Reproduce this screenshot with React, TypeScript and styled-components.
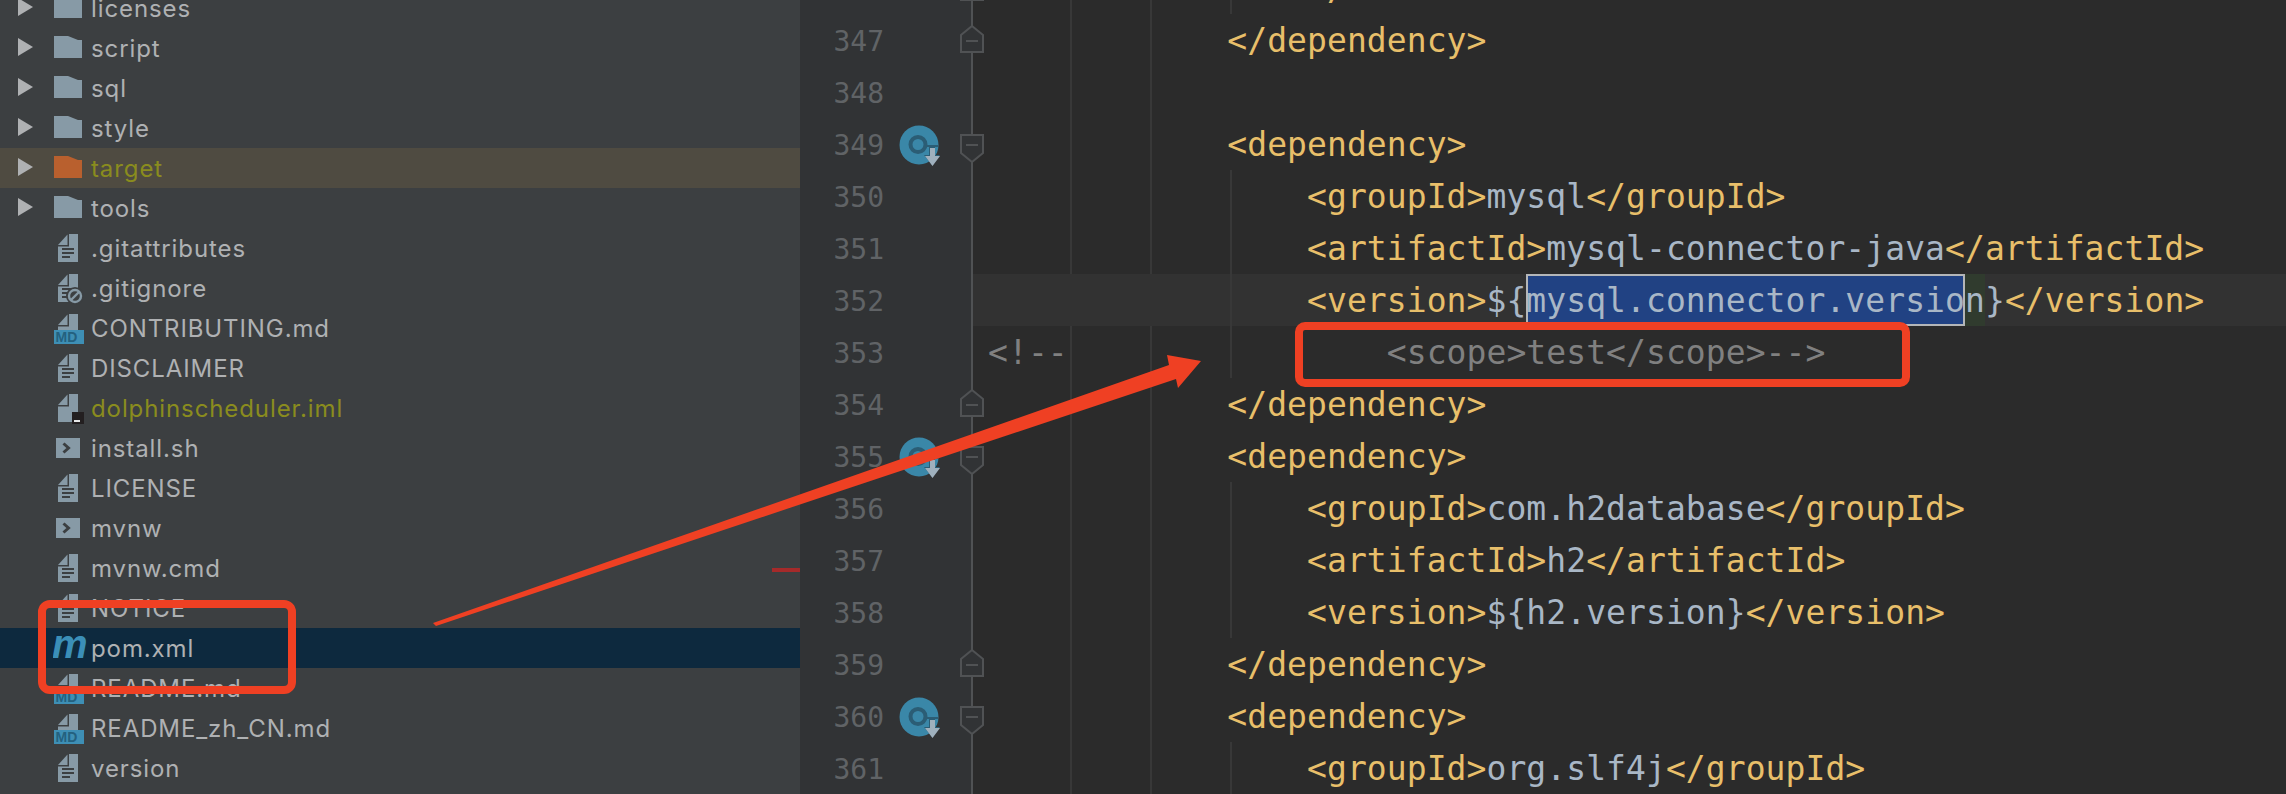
import React from 'react'

import styled, { createGlobalStyle } from 'styled-components'

const GlobalStyle = createGlobalStyle`
  html, body {
    margin: 0;
    padding: 0;
    background: #2b2b2b;
  }
`

const Root = styled.div`
  position: relative;
  display: flex;
  width: 2286px;
  height: 794px;
  overflow: hidden;
`

const Sidebar = styled.div`
  flex: 0 0 800px;
  background: #3c3f41;
`

const TreeList = styled.div`
  margin-top: -12px;
`

const TreeRow = styled.div<{ $state?: string }>`
  display: flex;
  align-items: center;
  height: 40px;
  background: ${(p) => (p.$state === 'selected' ? '#0d293e' : p.$state === 'ignored' ? '#4f4b41' : 'transparent')};
`

const Arrow = styled.span`
  display: flex;
  flex: 0 0 53px;
  padding: 0 0 2px 18px;
  box-sizing: border-box;
`

const IconSlot = styled.span`
  display: flex;
  flex: 0 0 37px;
`

const TreeLabel = styled.span<{ $ignored?: boolean }>`
  font-family: Inter, "Noto Sans", sans-serif;
  font-size: 24px;
  letter-spacing: 0.9px;
  white-space: nowrap;
  color: ${(p) => (p.$ignored ? '#8a8c1e' : '#afb1b3')};
`

const Editor = styled.div`
  flex: 1;
  display: flex;
  min-width: 0;
`

const Gutter = styled.div`
  flex: 0 0 173px;
  background: #313335;
  border-right: 2px solid #505254;
  box-sizing: border-box;
`

const CodePane = styled.div`
  flex: 1;
  min-width: 0;
  background-color: #2b2b2b;
  background-image: linear-gradient(#383838, #383838), linear-gradient(#383838, #383838);
  background-size: 2px 100%, 2px 100%;
  background-position: 97px 0, 177px 0;
  background-repeat: no-repeat;
`

const LineList = styled.div`
  margin-top: -38px;
`

const GutterRow = styled.div`
  position: relative;
  display: flex;
  align-items: center;
  height: 52px;
`

const LineNumber = styled.span`
  flex: 0 0 84px;
  padding-top: 2px;
  text-align: right;
  font-family: "DejaVu Sans Mono", monospace;
  font-size: 28px;
  color: #606366;
`

const MarkerSlot = styled.span`
  display: flex;
  margin-left: 15px;
  padding-top: 5px;
`

const Fold = styled.svg<{ $kind: string }>`
  position: absolute;
  left: 160px;
  top: ${(p) => (p.$kind === 'start' ? 16 : 11)}px;
`

const CodeRow = styled.div<{ $current?: boolean; $guide?: boolean }>`
  position: relative;
  height: 52px;
  line-height: 54px;
  padding-left: 15px;
  font-family: "DejaVu Sans Mono", monospace;
  font-size: 33px;
  letter-spacing: 0.07px;
  white-space: pre;
  background: ${(p) => (p.$current ? '#323232' : 'transparent')};
  ${(p) =>
    p.$guide &&
    `&::before {
      content: '';
      position: absolute;
      left: 257px;
      top: 0;
      bottom: 0;
      width: 2px;
      background: #383838;
    }`}
`

const Tag = styled.span`
  color: #e8bf6a;
`

const Value = styled.span`
  color: #a9b7c6;
`

const Comment = styled.span`
  color: #808080;
`

const Selection = styled.span`
  display: inline-block;
  vertical-align: top;
  height: 52px;
  background: #214283;
  box-shadow: inset 0 0 0 2px #b4b6b8;
  color: #a9b7c6;
`

const BraceMatch = styled.span`
  display: inline-block;
  vertical-align: top;
  height: 52px;
  background: #303b2e;
  color: #a9b7c6;
`

const RedFrame = styled.div<{ $left: number; $top: number; $width: number; $height: number; $radius: number }>`
  position: absolute;
  left: ${(p) => p.$left}px;
  top: ${(p) => p.$top}px;
  width: ${(p) => p.$width}px;
  height: ${(p) => p.$height}px;
  box-sizing: border-box;
  border: 8px solid #ef4023;
  border-radius: ${(p) => p.$radius}px;
`

const RedDash = styled.div`
  position: absolute;
  left: 772px;
  top: 568px;
  width: 28px;
  height: 4px;
  background: #a52a2a;
`

const ArrowOverlay = styled.svg`
  position: absolute;
  left: 0;
  top: 0;
  pointer-events: none;
`

const blue = '#879aa6'
const dark = '#3c3f41'

function Page({ short }: { short?: boolean }) {
  return (
    <>
      <polygon points="14.5,6.5 14.5,17 5,17" fill={blue} />
      <path d={short ? 'M16 6H25V22H5V18.5H16Z' : 'M16 6H25V34H5V18.5H16Z'} fill={blue} />
    </>
  )
}

function Folder({ color }: { color: string }) {
  return (
    <svg width="38" height="40">
      <path d="M1 8H15L25 12H29V30H1Z" fill={color} />
    </svg>
  )
}

function FileIcon({ kind }: { kind: string }) {
  if (kind === 'folder') return <Folder color={blue} />
  if (kind === 'target') return <Folder color="#b9602e" />
  if (kind === 'shell') {
    return (
      <svg width="38" height="40">
        <rect x="3" y="10" width="24" height="20" fill={blue} />
        <path d="M10.5 15.5L15.5 20L10.5 24.5" fill="none" stroke={dark} strokeWidth="3" />
      </svg>
    )
  }
  if (kind === 'maven') {
    return (
      <svg width="38" height="40">
        <text x="-1" y="30" fontFamily="Liberation Sans" fontWeight="700" fontStyle="italic" fontSize="40" fill="#3b8fb8">
          m
        </text>
      </svg>
    )
  }
  if (kind === 'md') {
    return (
      <svg width="38" height="40">
        <Page short />
        <rect x="1" y="22" width="30" height="14" fill="#3e8fb5" />
        <text x="2.5" y="33.5" fontFamily="Liberation Sans" fontWeight="700" fontSize="14" fill="#24617f">
          MD
        </text>
      </svg>
    )
  }
  return (
    <svg width="38" height="40">
      <Page />
      {(kind === 'text' || kind === 'ignore') && (
        <path d="M9 21H21M9 25H21M9 29H17" stroke={dark} strokeWidth="2" />
      )}
      {kind === 'ignore' && (
        <>
          <circle cx="22" cy="28" r="9" fill={dark} />
          <circle cx="22" cy="28" r="6" fill="none" stroke={blue} strokeWidth="2.4" />
          <path d="M18 32L26 24" stroke={blue} strokeWidth="2.4" />
        </>
      )}
      {kind === 'iml' && (
        <>
          <rect x="19" y="24" width="12" height="12" fill="#231f20" />
          <rect x="21" y="32" width="6" height="2" fill="#e8e8e8" />
        </>
      )}
    </svg>
  )
}

const treeItems = [
  { name: 'licenses', icon: 'folder' },
  { name: 'script', icon: 'folder' },
  { name: 'sql', icon: 'folder' },
  { name: 'style', icon: 'folder' },
  { name: 'target', icon: 'target', state: 'ignored' },
  { name: 'tools', icon: 'folder' },
  { name: '.gitattributes', icon: 'text' },
  { name: '.gitignore', icon: 'ignore' },
  { name: 'CONTRIBUTING.md', icon: 'md' },
  { name: 'DISCLAIMER', icon: 'text' },
  { name: 'dolphinscheduler.iml', icon: 'iml', state: 'olive' },
  { name: 'install.sh', icon: 'shell' },
  { name: 'LICENSE', icon: 'text' },
  { name: 'mvnw', icon: 'shell' },
  { name: 'mvnw.cmd', icon: 'text' },
  { name: 'NOTICE', icon: 'text' },
  { name: 'pom.xml', icon: 'maven', state: 'selected' },
  { name: 'README.md', icon: 'md' },
  { name: 'README_zh_CN.md', icon: 'md' },
  { name: 'version', icon: 'text' },
]

function TreeItem({ item }: { item: { name: string; icon: string; state?: string } }) {
  const isFolder = item.icon === 'folder' || item.icon === 'target'
  return (
    <TreeRow $state={item.state}>
      <Arrow>
        {isFolder && (
          <svg width="15" height="18">
            <polygon points="0,0 15,9 0,18" fill="#afb1b3" />
          </svg>
        )}
      </Arrow>
      <IconSlot>
        <FileIcon kind={item.icon} />
      </IconSlot>
      <TreeLabel $ignored={item.state === 'ignored' || item.state === 'olive'}>{item.name}</TreeLabel>
    </TreeRow>
  )
}

function MavenMark() {
  return (
    <svg width="44" height="44">
      <circle cx="20" cy="20" r="19.5" fill="#3a87a8" />
      <circle cx="19" cy="19.5" r="7.5" fill="none" stroke="#2b5d75" strokeWidth="4" />
      <path d="M25 21H39" stroke="#2b5d75" strokeWidth="2" />
      <path d="M30 22H36V30H41L33 40L25 30H30Z" fill="#2b5d75" />
      <path d="M31 23H36V31H41L33.5 41L26 31H31Z" fill="#9fb0bd" />
    </svg>
  )
}

function FoldMark({ kind }: { kind: string }) {
  const outline = kind === 'start' ? 'M1 1H23V19L12 28L1 19Z' : 'M12 1L23 10V27H1V10Z'
  const dashY = kind === 'start' ? 11 : 16
  return (
    <Fold $kind={kind} width="24" height="29">
      <path d={outline} fill="#313335" stroke="#505254" strokeWidth="2" />
      <path d={`M6 ${dashY}H18`} stroke="#505254" strokeWidth="2" />
    </Fold>
  )
}

const foldMarks: Record<number, string> = {
  346: 'end',
  347: 'end',
  349: 'start',
  354: 'end',
  355: 'start',
  359: 'end',
  360: 'start',
}

const mavenLines = [349, 355, 360]

const lineNumbers = Array.from({ length: 16 }, (_, i) => 346 + i)

const guideLines = [346, 350, 351, 352, 353, 356, 357, 358, 361]

const indent = '            '
const deeper = '                '

function tagLine(pad: string, open: string, value: string, close: string) {
  return (
    <>
      {pad}
      <Tag>{`<${open}>`}</Tag>
      <Value>{value}</Value>
      <Tag>{`</${close}>`}</Tag>
    </>
  )
}

function plainTag(text: string) {
  return (
    <>
      {indent}
      <Tag>{text}</Tag>
    </>
  )
}

const codeLines: Record<number, React.ReactNode> = {
  346: (
    <>
      {deeper}
      <Tag>{'</exclusions>'}</Tag>
    </>
  ),
  347: plainTag('</dependency>'),
  349: plainTag('<dependency>'),
  350: tagLine(deeper, 'groupId', 'mysql', 'groupId'),
  351: tagLine(deeper, 'artifactId', 'mysql-connector-java', 'artifactId'),
  352: (
    <>
      {deeper}
      <Tag>{'<version>'}</Tag>
      <Value>{'${'}</Value>
      <Selection>mysql.connector.versio</Selection>
      <BraceMatch>n</BraceMatch>
      <Value>{'}'}</Value>
      <Tag>{'</version>'}</Tag>
    </>
  ),
  353: <Comment>{'<!--                <scope>test</scope>-->'}</Comment>,
  354: plainTag('</dependency>'),
  355: plainTag('<dependency>'),
  356: tagLine(deeper, 'groupId', 'com.h2database', 'groupId'),
  357: tagLine(deeper, 'artifactId', 'h2', 'artifactId'),
  358: tagLine(deeper, 'version', '${h2.version}', 'version'),
  359: plainTag('</dependency>'),
  360: plainTag('<dependency>'),
  361: tagLine(deeper, 'groupId', 'org.slf4j', 'groupId'),
}

export default function App() {
  return (
    <Root>
      <GlobalStyle />
      <Sidebar>
        <TreeList>
          {treeItems.map((item) => (
            <TreeItem key={item.name} item={item} />
          ))}
        </TreeList>
      </Sidebar>
      <Editor>
        <Gutter>
          <LineList>
            {lineNumbers.map((n) => (
              <GutterRow key={n}>
                <LineNumber>{n}</LineNumber>
                {mavenLines.includes(n) && (
                  <MarkerSlot>
                    <MavenMark />
                  </MarkerSlot>
                )}
                {foldMarks[n] && <FoldMark kind={foldMarks[n]} />}
              </GutterRow>
            ))}
          </LineList>
        </Gutter>
        <CodePane>
          <LineList>
            {lineNumbers.map((n) => (
              <CodeRow key={n} $current={n === 352} $guide={guideLines.includes(n)}>
                {codeLines[n]}
              </CodeRow>
            ))}
          </LineList>
        </CodePane>
      </Editor>
      <RedDash />
      <RedFrame $left={38} $top={600} $width={258} $height={94} $radius={12} />
      <RedFrame $left={1295} $top={322} $width={615} $height={65} $radius={10} />
      <ArrowOverlay width="2286" height="794">
        <polygon points="433,623 1169,365 1167,355 1201,361 1178,388 1176,379 436,626" fill="#ef4023" />
      </ArrowOverlay>
    </Root>
  )
}
